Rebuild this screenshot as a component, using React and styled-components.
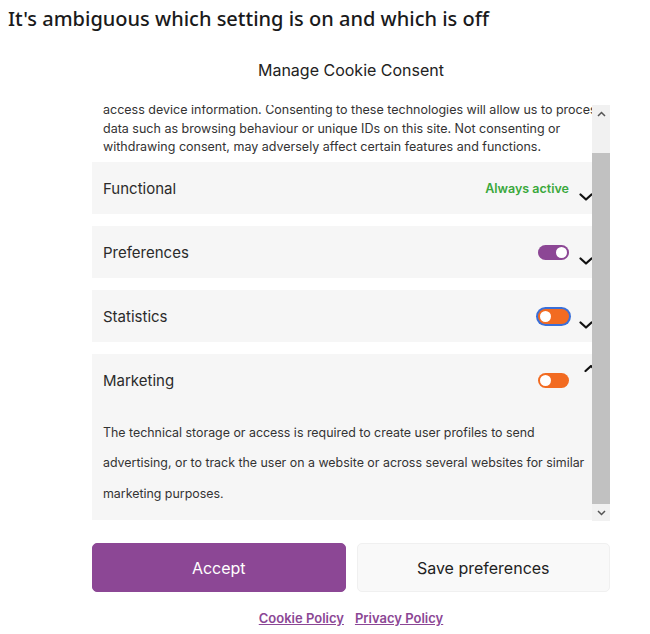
import React from 'react';
import styled, { createGlobalStyle } from 'styled-components';

const GlobalStyle = createGlobalStyle`
    body {
        margin: 0;
        background: #ffffff;
        font-family: Inter, "Liberation Sans", sans-serif;
    }
`;

const PURPLE = '#8c4795';
const ORANGE = '#f26b21';

const Page = styled.div`
    width: 650px;
    height: 634px;
    overflow: hidden;
`;

const Title = styled.h1`
    margin: 0;
    padding: 6px 0 0 8px;
    font-family: "Noto Sans", "Liberation Sans", sans-serif;
    font-size: 20px;
    font-weight: 500;
    line-height: 26px;
    color: #1a1a1b;
`;

const Dialog = styled.div`
    width: 518px;
    margin-left: 92px;
    display: flex;
    flex-direction: column;
`;

const DialogHeader = styled.div`
    margin-top: 28px;
    text-align: center;
    font-size: 16px;
    line-height: 20px;
    color: #222;
`;

const ScrollArea = styled.div`
    margin-top: 25px;
    height: 416px;
    display: flex;
`;

const Viewport = styled.div`
    width: 500px;
    overflow: hidden;
`;

const Intro = styled.p`
    margin: -4px 0 0;
    padding-left: 11px;
    font-size: 12.5px;
    line-height: 18.5px;
    color: #333;
    white-space: nowrap;
`;

const Category = styled.div`
    margin-top: ${(p) => (p.$first ? '5.5px' : '12px')};
    background: #f6f6f6;
`;

const CategoryHead = styled.div`
    height: 52px;
    display: flex;
    align-items: center;
    padding-left: 11px;
`;

const CategoryName = styled.span`
    flex: 1;
    font-size: 15px;
    font-weight: 400;
    color: #2b2b2b;
`;

const AlwaysActive = styled.span`
    font-size: 12.5px;
    font-weight: 600;
    color: #3aa83c;
`;

const Toggle = styled.span`
    position: relative;
    width: 31px;
    height: 15px;
    border-radius: 8px;
    background: ${(p) => (p.$on ? PURPLE : ORANGE)};
    box-shadow: ${(p) => (p.$focus ? '0 0 0 2px #3a6fd8' : 'none')};
    &::after {
        content: '';
        position: absolute;
        top: 2px;
        left: ${(p) => (p.$on ? '18px' : '2px')};
        width: 11px;
        height: 11px;
        border-radius: 50%;
        background: #fff;
    }
`;

const ChevronBox = styled.span`
    display: flex;
    width: 14px;
    margin: 0 -1px 0 10px;
    transform: ${(p) => (p.$open ? 'translate(5px, -11.5px) rotate(180deg)' : 'translateY(9px)')};
`;

const Description = styled.p`
    margin: 0;
    padding: 11.75px 0 10.5px 11px;
    font-size: 12.4px;
    line-height: 30.5px;
    color: #333;
`;

const Scrollbar = styled.div`
    width: 18px;
    display: flex;
    flex-direction: column;
    background: #f1f1f1;
`;

const ScrollButton = styled.div`
    height: 17px;
    display: flex;
    align-items: center;
    justify-content: center;
`;

const Track = styled.div`
    flex: 1;
    display: flex;
    flex-direction: column;
    padding-top: 31px;
`;

const Thumb = styled.div`
    flex: 1;
    background: #c1c1c1;
`;

const Buttons = styled.div`
    margin-top: 22px;
    display: grid;
    grid-template-columns: 1fr 1fr;
    gap: 11px;
`;

const Button = styled.button`
    height: 49px;
    border-radius: 5px;
    border: 1px solid ${(p) => (p.$primary ? PURPLE : '#f0f0f0')};
    background: ${(p) => (p.$primary ? PURPLE : '#f9f9f9')};
    color: ${(p) => (p.$primary ? '#fff' : '#222')};
    font-family: Inter, "Liberation Sans", sans-serif;
    font-size: 16px;
    font-weight: 400;
`;

const Links = styled.div`
    margin-top: 17px;
    display: flex;
    justify-content: center;
    gap: 11px;
`;

const Link = styled.a`
    font-size: 13px;
    font-weight: 600;
    line-height: 18px;
    color: ${PURPLE};
    text-decoration: underline;
`;

function Chevron({ open }) {
    return (
        <ChevronBox $open={open}>
            <svg width="14" height="8" viewBox="0 0 14 8">
                <path d="M1.5 1.5 L7 6.5 L12.5 1.5" fill="none" stroke="#111" strokeWidth="2.2" strokeLinecap="round" strokeLinejoin="round" />
            </svg>
        </ChevronBox>
    );
}

function Arrow({ up }) {
    return (
        <svg width="9" height="6" viewBox="0 0 9 6">
            <path d={up ? 'M1 5 L4.5 1.5 L8 5' : 'M1 1 L4.5 4.5 L8 1'} fill="none" stroke="#555" strokeWidth="1.5" />
        </svg>
    );
}

const categories = [
    { name: 'Functional', always: true },
    { name: 'Preferences', on: true },
    { name: 'Statistics', focus: true },
    {
        name: 'Marketing',
        open: true,
        text: 'The technical storage or access is required to create user profiles to send advertising, or to track the user on a website or across several websites for similar marketing purposes.',
    },
];

function App() {
    return (
        <Page>
            <GlobalStyle />
            <Title>It's ambiguous which setting is on and which is off</Title>
            <Dialog>
                <DialogHeader>Manage Cookie Consent</DialogHeader>
                <ScrollArea>
                    <Viewport>
                        <Intro>
                            access device information. Consenting to these technologies will allow us to process
                            <br />
                            data such as browsing behaviour or unique IDs on this site. Not consenting or
                            <br />
                            withdrawing consent, may adversely affect certain features and functions.
                        </Intro>
                        {categories.map((c, i) => (
                            <Category key={c.name} $first={i === 0}>
                                <CategoryHead>
                                    <CategoryName>{c.name}</CategoryName>
                                    {c.always ? <AlwaysActive>Always active</AlwaysActive> : <Toggle $on={c.on} $focus={c.focus} />}
                                    <Chevron open={c.open} />
                                </CategoryHead>
                                {c.text && <Description>{c.text}</Description>}
                            </Category>
                        ))}
                    </Viewport>
                    <Scrollbar>
                        <ScrollButton>
                            <Arrow up />
                        </ScrollButton>
                        <Track>
                            <Thumb />
                        </Track>
                        <ScrollButton>
                            <Arrow />
                        </ScrollButton>
                    </Scrollbar>
                </ScrollArea>
                <Buttons>
                    <Button $primary>Accept</Button>
                    <Button>Save preferences</Button>
                </Buttons>
                <Links>
                    <Link>Cookie Policy</Link>
                    <Link>Privacy Policy</Link>
                </Links>
            </Dialog>
        </Page>
    );
}

export default App;
